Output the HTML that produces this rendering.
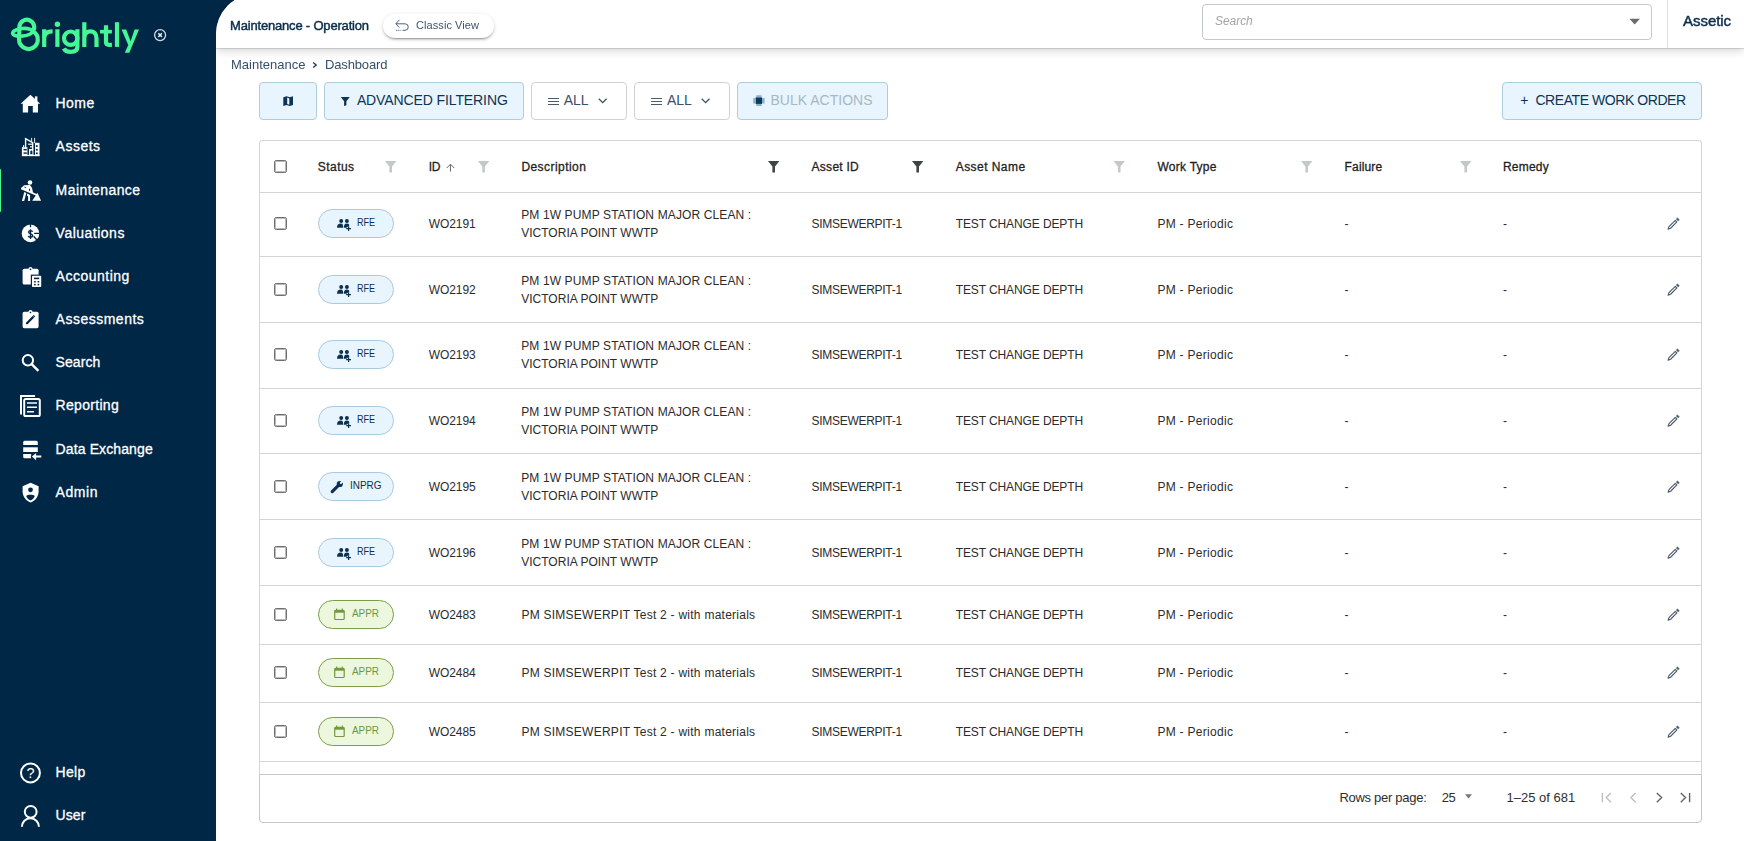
<!DOCTYPE html>
<html><head><meta charset="utf-8"><title>Maintenance - Operation</title>
<style>
*{box-sizing:border-box;margin:0;padding:0}
html,body{width:1744px;height:841px;overflow:hidden;background:#002746;font-family:"Liberation Sans",sans-serif}
.abs,.t,svg.i{position:absolute}
.t{white-space:pre;line-height:20px;height:20px}
#main{position:absolute;left:216px;top:-6px;width:1528px;height:847px;background:#fff;border-top-left-radius:40px}
#bar{position:absolute;left:216px;top:-6px;width:1528px;height:54px;background:#fff;border-top-left-radius:40px;
 box-shadow:0 1px 0 0 rgba(0,0,0,.12),0 3px 8px 0 rgba(0,0,0,.16);clip-path:inset(0 0 -30px 0)}
.btn{position:absolute;top:82px;height:38px;border-radius:4px;border:1px solid #aecddc;background:#e8f5fe}
.btn.w{background:#fff;border-color:#cfd3d6}
.hl{position:absolute;left:260px;width:1441px;height:1px;background:#d2d6d8}
.cb{position:absolute;left:274px;width:13px;height:13px;border:1px solid #6e6e6e;border-radius:2.2px;background:#fff;box-shadow:inset 0 0 0 1px rgba(118,118,118,.5)}
.chip{position:absolute;left:318px;width:76px;height:29px;border-radius:15px;border:1px solid #a9c9dc;background:#e8f5fe}
.chip.g{border-color:#7a9f48;background:#ecf7de}
</style></head><body>
<!-- sidebar active marker -->
<div class="abs" style="left:0;top:168.6px;width:1.2px;height:43.2px;background:#46f796;border-radius:0 1.2px 1.2px 0"></div>
<svg class="i" style="left:0;top:0" width="216" height="70" viewBox="0 0 216 70" fill="none" stroke="#46f796" stroke-width="4.2">
<path d="M33.8,31.9 A9.35,9.35 0 1 1 19.1,39.55 L19.4,27.2 A7.4,7.4 0 1 1 31.9,32.55" stroke-linejoin="round"/>
<ellipse cx="22.5" cy="32.3" rx="9.9" ry="3.8" stroke-width="3.6" transform="rotate(-6 22.5 32.3)"/>
<path d="M44.2,46.9 V29.3 M44.2,38.5 Q44.2,31.4 52.6,31.4"/>
<path d="M57.4,29.3 V46.9"/>
<circle cx="57.4" cy="24.3" r="2.7" fill="#46f796" stroke="none"/>
<circle cx="70.7" cy="38.2" r="6.7"/>
<path d="M77.4,29.3 V46.5 C77.4,50.5 74.5,51.9 70.8,51.9 C67.5,51.9 65,50.6 63.8,48.4"/>
<path d="M84.3,22.2 V46.9 M84.3,38.4 C84.3,33.5 87,31.4 90.4,31.4 C93.8,31.4 96.5,33.5 96.5,38.4 V46.9"/>
<path d="M106,25.2 V42 Q106,44.8 109,44.8 H111.9"/>
<path d="M100,31.7 H111.9" stroke-width="3.6"/>
<path d="M117,22.2 V46.9"/>
<path d="M121.5,29.5 L126.2,29.5 L130.6,41.3 L134.6,29.5 L139,29.5 L129.3,52.8 L124.8,52.8 L128.3,44.9 Z" fill="#46f796" stroke="none"/>
<circle cx="160.1" cy="35.1" r="5.5" stroke="#d3dae1" stroke-width="1.3"/>
<path d="M158.3,33.3 L161.9,36.9 M161.9,33.3 L158.3,36.9" stroke="#e6ebf0" stroke-width="1.5"/>
</svg>

<svg class="i" style="left:0;top:0" width="216" height="841" viewBox="0 0 216 841" fill="#fff" stroke="none">
<!-- home -->
<path d="M30.4,94.8 L40.2,103.8 L38,103.8 L38,112.4 L32.8,112.4 L32.8,106.1 L28.1,106.1 L28.1,112.4 L22.8,112.4 L22.8,103.8 L20.6,103.8 Z"/>
<rect x="34.9" y="96.4" width="2.5" height="5"/>
<!-- assets -->
<rect x="21.9" y="147.2" width="5.5" height="8.9"/><rect x="23" y="145.2" width="1.2" height="2.2"/>
<rect x="23.5" y="149" width="3.3" height="1.4" fill="#002746"/><rect x="23.5" y="152.4" width="3.3" height="1.4" fill="#002746"/>
<path d="M25.6,147.6 V138.6 L32.7,142.7 V149.4" fill="none" stroke="#fff" stroke-width="1.4"/>
<rect x="28.1" y="143.6" width="4.4" height="1.2"/><rect x="30" y="146.2" width="2.8" height="1.2"/>
<rect x="29" y="149" width="4.4" height="7.1"/>
<path d="M30.3,154.2 V151.6 A1.05,1.05 0 0 1 32.4,151.6 V154.2 Z" fill="#002746"/>
<rect x="35" y="142.8" width="4.5" height="13.3"/>
<rect x="35.9" y="145.2" width="1.8" height="1.7" fill="#002746"/><rect x="35.9" y="148.9" width="1.8" height="1.7" fill="#002746"/><rect x="35.9" y="152.5" width="1.8" height="1.7" fill="#002746"/>
<rect x="21.9" y="154.8" width="17.6" height="1.3"/>
<rect x="31.2" y="137.9" width="0.9" height="3.2"/><rect x="34.2" y="137.9" width="0.9" height="5.2"/>
<!-- maintenance -->
<circle cx="30" cy="182.5" r="2.3"/>
<path d="M21,187.9 L24.1,185.2 L29.9,185 L32,187.8 L33,192.6 L38.3,194.8 L37.6,196.3 L21,189.3 Z"/>
<path d="M32.2,200.8 L41.1,200.8 L37.4,192.8 L35.2,196.3 Z"/>
<path d="M24.3,192 L26.3,192.9 L24.2,200.9 L21.9,200.9 Z"/>
<path d="M27.3,193.6 L30.1,195 L30.1,200.9 L28.1,200.9 L28.1,196.2 L26.9,195.4 Z"/>
<path d="M24.5,187 L26.1,187.9 M29.55,188.7 V190.9" stroke="#002746" stroke-width="1" fill="none"/>
<!-- valuations -->
<circle cx="30.5" cy="233.4" r="8.8"/>
<path d="M34.2,233.4 H39.6 M33.6,236.2 L37.6,240.8 M30.5,224 V227.2" stroke="#002746" stroke-width="1.3"/>
<path d="M32.5,231.8 C32.2,230.2 28.6,230 28.6,232.2 C28.6,234.3 32.6,233.4 32.6,235.6 C32.6,237.9 28.7,237.6 28.3,235.9 M30.5,229.2 V238.9" fill="none" stroke="#002746" stroke-width="1.35"/>
<!-- accounting -->
<rect x="22.6" y="268.7" width="16" height="15.8" rx="1.6"/><circle cx="30.5" cy="269.2" r="2.1"/><circle cx="30.5" cy="269.4" r="0.8" fill="#002746"/>
<rect x="30.8" y="274.6" width="11.8" height="13.9" fill="#002746"/><rect x="32" y="275.8" width="9.2" height="11.3" rx="0.8"/>
<rect x="34" y="277.6" width="5.2" height="1.6" fill="#002746"/>
<rect x="34.1" y="281" width="1.6" height="1.5" fill="#002746"/><rect x="37.6" y="281" width="1.6" height="1.5" fill="#002746"/><rect x="34.1" y="283.9" width="1.6" height="1.5" fill="#002746"/><rect x="37.6" y="283.9" width="1.6" height="1.5" fill="#002746"/>
<!-- assessments -->
<rect x="22.6" y="311.7" width="16" height="16.5" rx="1.6"/><circle cx="30.5" cy="312.2" r="2.1"/><circle cx="30.5" cy="312.5" r="0.8" fill="#002746"/>
<path d="M27,323.2 L32.9,317.2" stroke="#002746" stroke-width="2.3" stroke-linecap="round"/><path d="M33.7,316.4 L34.4,315.7" stroke="#002746" stroke-width="2.3"/>
<!-- search -->
<circle cx="27.9" cy="360.3" r="5.2" fill="none" stroke="#fff" stroke-width="2"/><path d="M31.9,364.4 L38.4,370.9" stroke="#fff" stroke-width="2.4"/>
<!-- reporting -->
<path d="M21,414.6 V395.9 H35" fill="none" stroke="#fff" stroke-width="2"/>
<rect x="24.2" y="398.9" width="15.6" height="17.1" rx="1.6" fill="none" stroke="#fff" stroke-width="2"/>
<path d="M27,403 H37 M27,407.3 H37 M27,411.7 H34" stroke="#fff" stroke-width="1.5"/>
<!-- data exchange -->
<path d="M23.2,445.1 V442.3 Q23.2,440.8 24.7,440.8 H36.3 Q37.8,440.8 37.8,442.3 V445.1 Z"/>
<rect x="23.2" y="447.3" width="14.6" height="4.7"/>
<path d="M23.2,454.1 H31.2 V458.2 H24.7 Q23.2,458.2 23.2,456.7 Z"/>
<path d="M31.9,456.6 L36.1,452.9 V455.6 H41.3 V457.6 H36.1 V460.3 Z" stroke="#002746" stroke-width="2.2" stroke-linejoin="round"/><path d="M31.9,456.6 L36.1,452.9 V455.6 H41.3 V457.6 H36.1 V460.3 Z"/>
<!-- admin -->
<path d="M30.6,482.8 L38.6,486.3 V491.5 C38.6,496.5 35.2,501 30.6,502.5 C26,501 22.6,496.5 22.6,491.5 V486.3 Z"/>
<circle cx="30.5" cy="489.8" r="2.4" fill="#002746"/>
<path d="M26.2,495.9 C27.5,494.2 33.5,494.2 34.8,495.9 C34,498 32.5,499.7 30.5,500.5 C28.5,499.7 27,498 26.2,495.9 Z" fill="#002746"/>
<!-- help -->
<circle cx="30.45" cy="772.95" r="9.45" fill="none" stroke="#fff" stroke-width="2"/>
<text x="30.45" y="778.3" font-family="Liberation Sans, sans-serif" font-size="14.5" fill="#fff" text-anchor="middle">?</text>
<!-- user -->
<circle cx="30.7" cy="811.8" r="5.9" fill="none" stroke="#fff" stroke-width="2"/>
<path d="M21.9,826.8 A8.5,8.5 0 0 1 38.9,826.8" fill="none" stroke="#fff" stroke-width="2"/>
</svg>

<div id="main"></div>
<div id="bar"></div>
<div class="abs" style="left:382.5px;top:13.5px;width:111.5px;height:24px;border-radius:12px;background:#fff;box-shadow:0 3px 1px -2px rgba(0,0,0,.2),0 2px 2px 0 rgba(0,0,0,.14),0 1px 5px 0 rgba(0,0,0,.12)"></div>
<div class="abs" style="left:1202px;top:4px;width:450px;height:36px;border:1px solid #c3c9cd;border-radius:4px;background:#fff"></div>
<div class="abs" style="left:1667px;top:0;width:1px;height:48px;background:#e0e0e0"></div>
<div class="btn" style="left:259px;width:58px"></div>
<div class="btn" style="left:324px;width:200px"></div>
<div class="btn w" style="left:531px;width:96px"></div>
<div class="btn w" style="left:634px;width:96px"></div>
<div class="btn" style="left:737px;width:151px"></div>
<div class="btn" style="left:1502px;width:200px"></div>
<svg class="i" style="left:216px;top:0" width="1528" height="130" viewBox="216 0 1528 130" fill="none">
<path d="M399.4,19.8 L395.9,23.8 L399.4,27.6 M395.9,23.8 H405 A3.25,3.25 0 0 1 405,30.3 H402.5" stroke="#4a6580" stroke-width="1"/>
<path d="M396,30.3 H401.5" stroke="#4a6580" stroke-width="1" stroke-dasharray="1 0.8"/>
<path d="M1629.5,18.8 H1639.9 L1634.7,24.4 Z" fill="#6b6b6b"/>
<path d="M313.2,62.5 L316.2,65 L313.2,67.6" stroke="#1a3855" stroke-width="1.3"/>
<path d="M283.3,97.3 L286.7,96.2 L289.8,97.3 L293,96.2 V104.9 L289.8,106 L286.7,104.9 L283.3,106 Z" fill="#0e3353"/>
<path d="M287.2,97.6 L289.3,98.4 V104.7 L287.2,103.9 Z" fill="#eef8ff"/>
<path d="M340.8,96.9 H349.8 L346.4,101.3 V105.2 L344.1,106 V101.3 Z" fill="#0e3353"/>
<path d="M548,98.5 H559 M548,101.5 H559 M548,104.5 H559" stroke="#4a5a6a" stroke-width="1"/>
<path d="M651,98.5 H662 M651,101.5 H662 M651,104.5 H662" stroke="#4a5a6a" stroke-width="1"/>
<path d="M598.8,98.7 L602.6999999999999,102.6 L606.5999999999999,98.7" stroke="#3b4f66" stroke-width="1.3"/>
<path d="M701.7,98.7 L705.6,102.6 L709.5,98.7" stroke="#3b4f66" stroke-width="1.3"/>
<rect x="755.6" y="97.3" width="6.4" height="6.6" fill="#0a3a5c"/>
<path d="M756.2,95.2 h5.4 v2.1 h-5.4 Z M756.2,103.9 h5.4 v2.1 h-5.4 Z M753.2,98 h2.4 v5.4 h-2.4 Z M762,98 h2.6 v5.4 h-2.6 Z" fill="#8fb1c7"/>
</svg>
<div class="abs" style="left:259px;top:140px;width:1443px;height:634px;border:1px solid #d2d6d8;border-bottom:none;border-radius:4px 4px 0 0"></div>
<div class="abs" style="left:259px;top:774px;width:1443px;height:49px;border:1px solid #c6c6c6;border-radius:0 0 4px 4px"></div>
<div class="hl" style="top:192px"></div>
<div class="hl" style="top:256px"></div>
<div class="hl" style="top:322px"></div>
<div class="hl" style="top:388px"></div>
<div class="hl" style="top:453px"></div>
<div class="hl" style="top:519px"></div>
<div class="hl" style="top:585px"></div>
<div class="hl" style="top:644px"></div>
<div class="hl" style="top:702px"></div>
<div class="hl" style="top:761px"></div>
<div class="cb" style="top:160px"></div>
<div class="cb" style="top:217px"></div>
<div class="chip" style="top:209px"></div>
<div class="cb" style="top:283px"></div>
<div class="chip" style="top:275px"></div>
<div class="cb" style="top:348px"></div>
<div class="chip" style="top:340px"></div>
<div class="cb" style="top:414px"></div>
<div class="chip" style="top:406px"></div>
<div class="cb" style="top:480px"></div>
<div class="chip" style="top:472px"></div>
<div class="cb" style="top:546px"></div>
<div class="chip" style="top:538px"></div>
<div class="cb" style="top:608px"></div>
<div class="chip g" style="top:600px"></div>
<div class="cb" style="top:666px"></div>
<div class="chip g" style="top:658px"></div>
<div class="cb" style="top:725px"></div>
<div class="chip g" style="top:717px"></div>
<svg class="i" style="left:216px;top:130px" width="1528" height="711" viewBox="216 130 1528 711" fill="none">
<path d="M385,160.9 h11.4 l-4.4,5.7 v6 h-2.6 v-6 Z" fill="#c3c8cb"/>
<path d="M477.9,160.9 h11.4 l-4.4,5.7 v6 h-2.6 v-6 Z" fill="#c3c8cb"/>
<path d="M768,160.9 h11.4 l-4.4,5.7 v6 h-2.6 v-6 Z" fill="#3f4447"/>
<path d="M912,160.9 h11.4 l-4.4,5.7 v6 h-2.6 v-6 Z" fill="#3f4447"/>
<path d="M1113.5,160.9 h11.4 l-4.4,5.7 v6 h-2.6 v-6 Z" fill="#c3c8cb"/>
<path d="M1301,160.9 h11.4 l-4.4,5.7 v6 h-2.6 v-6 Z" fill="#c3c8cb"/>
<path d="M1460,160.9 h11.4 l-4.4,5.7 v6 h-2.6 v-6 Z" fill="#c3c8cb"/>
<path d="M450.45,171.6 V164.3 M446.7,168 L450.45,164.2 L454.2,168" stroke="#666" stroke-width="1"/>
<g transform="translate(0 0)" fill="#0b3050"><circle cx="341.2" cy="221.1" r="2"/><circle cx="346.9" cy="221.1" r="2"/><path d="M337,227.7 Q337,223.6 341,223.6 Q343.2,223.6 343.2,227.7 Z M343.8,227.7 Q343.8,223.6 347,223.6 Q349.4,223.6 349.4,225.6 L346.5,227.7 Z"/><path d="M348.6,226.3 V231.1 M346.2,228.7 H351" stroke="#0b3050" stroke-width="1.2"/></g>
<path d="M1668.10,229.10 L1670.61,228.22 L1676.90,221.92 L1675.28,220.30 L1668.98,226.59 Z" stroke="#4b5c6b" stroke-width="1.15" stroke-linejoin="round"/>
<path d="M1678.21,220.97 L1679.34,219.84 L1677.36,217.86 L1676.23,218.99 Z" fill="#4b5c6b" stroke="#4b5c6b" stroke-width="0.5" stroke-linejoin="round"/>
<g transform="translate(0 66)" fill="#0b3050"><circle cx="341.2" cy="221.1" r="2"/><circle cx="346.9" cy="221.1" r="2"/><path d="M337,227.7 Q337,223.6 341,223.6 Q343.2,223.6 343.2,227.7 Z M343.8,227.7 Q343.8,223.6 347,223.6 Q349.4,223.6 349.4,225.6 L346.5,227.7 Z"/><path d="M348.6,226.3 V231.1 M346.2,228.7 H351" stroke="#0b3050" stroke-width="1.2"/></g>
<path d="M1668.10,295.10 L1670.61,294.22 L1676.90,287.92 L1675.28,286.30 L1668.98,292.59 Z" stroke="#4b5c6b" stroke-width="1.15" stroke-linejoin="round"/>
<path d="M1678.21,286.97 L1679.34,285.84 L1677.36,283.86 L1676.23,284.99 Z" fill="#4b5c6b" stroke="#4b5c6b" stroke-width="0.5" stroke-linejoin="round"/>
<g transform="translate(0 131)" fill="#0b3050"><circle cx="341.2" cy="221.1" r="2"/><circle cx="346.9" cy="221.1" r="2"/><path d="M337,227.7 Q337,223.6 341,223.6 Q343.2,223.6 343.2,227.7 Z M343.8,227.7 Q343.8,223.6 347,223.6 Q349.4,223.6 349.4,225.6 L346.5,227.7 Z"/><path d="M348.6,226.3 V231.1 M346.2,228.7 H351" stroke="#0b3050" stroke-width="1.2"/></g>
<path d="M1668.10,360.10 L1670.61,359.22 L1676.90,352.92 L1675.28,351.30 L1668.98,357.59 Z" stroke="#4b5c6b" stroke-width="1.15" stroke-linejoin="round"/>
<path d="M1678.21,351.97 L1679.34,350.84 L1677.36,348.86 L1676.23,349.99 Z" fill="#4b5c6b" stroke="#4b5c6b" stroke-width="0.5" stroke-linejoin="round"/>
<g transform="translate(0 197)" fill="#0b3050"><circle cx="341.2" cy="221.1" r="2"/><circle cx="346.9" cy="221.1" r="2"/><path d="M337,227.7 Q337,223.6 341,223.6 Q343.2,223.6 343.2,227.7 Z M343.8,227.7 Q343.8,223.6 347,223.6 Q349.4,223.6 349.4,225.6 L346.5,227.7 Z"/><path d="M348.6,226.3 V231.1 M346.2,228.7 H351" stroke="#0b3050" stroke-width="1.2"/></g>
<path d="M1668.10,426.10 L1670.61,425.22 L1676.90,418.92 L1675.28,417.30 L1668.98,423.59 Z" stroke="#4b5c6b" stroke-width="1.15" stroke-linejoin="round"/>
<path d="M1678.21,417.97 L1679.34,416.84 L1677.36,414.86 L1676.23,415.99 Z" fill="#4b5c6b" stroke="#4b5c6b" stroke-width="0.5" stroke-linejoin="round"/>
<g transform="translate(0 0.8000000000000114)"><path d="M332.2,490.8 L338.5,484.5" stroke="#0b3050" stroke-width="3.1" stroke-linecap="round"/><circle cx="339.8" cy="483.2" r="3.1" fill="#0b3050"/><path d="M340.2,482.8 L343.6,479.4" stroke="#e8f5fe" stroke-width="2"/></g>
<path d="M1668.10,492.10 L1670.61,491.22 L1676.90,484.92 L1675.28,483.30 L1668.98,489.59 Z" stroke="#4b5c6b" stroke-width="1.15" stroke-linejoin="round"/>
<path d="M1678.21,483.97 L1679.34,482.84 L1677.36,480.86 L1676.23,481.99 Z" fill="#4b5c6b" stroke="#4b5c6b" stroke-width="0.5" stroke-linejoin="round"/>
<g transform="translate(0 329)" fill="#0b3050"><circle cx="341.2" cy="221.1" r="2"/><circle cx="346.9" cy="221.1" r="2"/><path d="M337,227.7 Q337,223.6 341,223.6 Q343.2,223.6 343.2,227.7 Z M343.8,227.7 Q343.8,223.6 347,223.6 Q349.4,223.6 349.4,225.6 L346.5,227.7 Z"/><path d="M348.6,226.3 V231.1 M346.2,228.7 H351" stroke="#0b3050" stroke-width="1.2"/></g>
<path d="M1668.10,558.10 L1670.61,557.22 L1676.90,550.92 L1675.28,549.30 L1668.98,555.59 Z" stroke="#4b5c6b" stroke-width="1.15" stroke-linejoin="round"/>
<path d="M1678.21,549.97 L1679.34,548.84 L1677.36,546.86 L1676.23,547.99 Z" fill="#4b5c6b" stroke="#4b5c6b" stroke-width="0.5" stroke-linejoin="round"/>
<g transform="translate(0 0)"><rect x="334.7" y="610.4" width="9.5" height="9.1" rx="1" stroke="#74983e" stroke-width="1.2"/><rect x="334.7" y="610.4" width="9.5" height="2.3" fill="#74983e"/><path d="M336.6,608.4 V610.5 M342.3,608.4 V610.5" stroke="#74983e" stroke-width="1.2"/></g>
<path d="M1668.10,620.10 L1670.61,619.22 L1676.90,612.92 L1675.28,611.30 L1668.98,617.59 Z" stroke="#4b5c6b" stroke-width="1.15" stroke-linejoin="round"/>
<path d="M1678.21,611.97 L1679.34,610.84 L1677.36,608.86 L1676.23,609.99 Z" fill="#4b5c6b" stroke="#4b5c6b" stroke-width="0.5" stroke-linejoin="round"/>
<g transform="translate(0 58)"><rect x="334.7" y="610.4" width="9.5" height="9.1" rx="1" stroke="#74983e" stroke-width="1.2"/><rect x="334.7" y="610.4" width="9.5" height="2.3" fill="#74983e"/><path d="M336.6,608.4 V610.5 M342.3,608.4 V610.5" stroke="#74983e" stroke-width="1.2"/></g>
<path d="M1668.10,678.10 L1670.61,677.22 L1676.90,670.92 L1675.28,669.30 L1668.98,675.59 Z" stroke="#4b5c6b" stroke-width="1.15" stroke-linejoin="round"/>
<path d="M1678.21,669.97 L1679.34,668.84 L1677.36,666.86 L1676.23,667.99 Z" fill="#4b5c6b" stroke="#4b5c6b" stroke-width="0.5" stroke-linejoin="round"/>
<g transform="translate(0 117)"><rect x="334.7" y="610.4" width="9.5" height="9.1" rx="1" stroke="#74983e" stroke-width="1.2"/><rect x="334.7" y="610.4" width="9.5" height="2.3" fill="#74983e"/><path d="M336.6,608.4 V610.5 M342.3,608.4 V610.5" stroke="#74983e" stroke-width="1.2"/></g>
<path d="M1668.10,737.10 L1670.61,736.22 L1676.90,729.92 L1675.28,728.30 L1668.98,734.59 Z" stroke="#4b5c6b" stroke-width="1.15" stroke-linejoin="round"/>
<path d="M1678.21,728.97 L1679.34,727.84 L1677.36,725.86 L1676.23,726.99 Z" fill="#4b5c6b" stroke="#4b5c6b" stroke-width="0.5" stroke-linejoin="round"/>
<path d="M1465,794.2 H1472 L1468.5,798.4 Z" fill="#777"/>
<path d="M1602.4,792.9 V802.3 M1611,793 L1606.3,797.6 L1611,802.2 M1635.6,793 L1631,797.6 L1635.6,802.2" stroke="#bdbdbd" stroke-width="1.4"/>
<path d="M1656.8,793 L1661.6,797.6 L1656.8,802.2 M1680.8,793 L1685.5,797.6 L1680.8,802.2 M1689.6,792.9 V802.3" stroke="#60646a" stroke-width="1.4"/>
</svg>
<div class="t" style="left:55.60px;top:93px;font-size:14px;color:#ffffff;letter-spacing:0.414px;-webkit-text-stroke:0.3px #ffffff;">Home</div>
<div class="t" style="left:55.60px;top:136px;font-size:14px;color:#ffffff;letter-spacing:0.497px;-webkit-text-stroke:0.3px #ffffff;">Assets</div>
<div class="t" style="left:55.60px;top:180px;font-size:14px;color:#ffffff;letter-spacing:0.433px;-webkit-text-stroke:0.3px #ffffff;">Maintenance</div>
<div class="t" style="left:55.60px;top:223px;font-size:14px;color:#ffffff;letter-spacing:0.495px;-webkit-text-stroke:0.3px #ffffff;">Valuations</div>
<div class="t" style="left:55.60px;top:266px;font-size:14px;color:#ffffff;letter-spacing:0.502px;-webkit-text-stroke:0.3px #ffffff;">Accounting</div>
<div class="t" style="left:55.60px;top:309px;font-size:14px;color:#ffffff;letter-spacing:0.495px;-webkit-text-stroke:0.3px #ffffff;">Assessments</div>
<div class="t" style="left:55.60px;top:352px;font-size:14px;color:#ffffff;letter-spacing:0.068px;-webkit-text-stroke:0.3px #ffffff;">Search</div>
<div class="t" style="left:55.60px;top:395px;font-size:14px;color:#ffffff;letter-spacing:0.300px;-webkit-text-stroke:0.3px #ffffff;">Reporting</div>
<div class="t" style="left:55.60px;top:439px;font-size:14px;color:#ffffff;letter-spacing:0.114px;-webkit-text-stroke:0.3px #ffffff;">Data Exchange</div>
<div class="t" style="left:55.60px;top:482px;font-size:14px;color:#ffffff;letter-spacing:0.553px;-webkit-text-stroke:0.3px #ffffff;">Admin</div>
<div class="t" style="left:55.60px;top:762px;font-size:14px;color:#ffffff;letter-spacing:0.301px;-webkit-text-stroke:0.3px #ffffff;">Help</div>
<div class="t" style="left:55.60px;top:805px;font-size:14px;color:#ffffff;letter-spacing:0.046px;-webkit-text-stroke:0.3px #ffffff;">User</div>
<div class="t" style="left:230.40px;top:16px;font-size:13px;color:#0b2d4b;letter-spacing:-0.182px;-webkit-text-stroke:0.45px #0b2d4b;will-change:transform;">Maintenance - Operation</div>
<div class="t" style="left:416.10px;top:15px;font-size:11px;color:#3a556f;letter-spacing:0.077px;will-change:transform;">Classic View</div>
<div class="t" style="left:1214.60px;top:11px;font-size:12px;color:#a3a3a3;letter-spacing:-0.046px;font-style:italic;will-change:transform;">Search</div>
<div class="t" style="left:1682.50px;top:11px;font-size:15px;color:#0b2d4b;letter-spacing:-0.043px;-webkit-text-stroke:0.45px #0b2d4b;will-change:transform;">Assetic</div>
<div class="t" style="left:230.70px;top:55px;font-size:13px;color:#34506a;letter-spacing:0.015px;will-change:transform;">Maintenance</div>
<div class="t" style="left:324.90px;top:55px;font-size:13px;color:#34506a;letter-spacing:-0.151px;will-change:transform;">Dashboard</div>
<div class="t" style="left:356.90px;top:90px;font-size:14px;color:#0e3353;letter-spacing:-0.108px;">ADVANCED FILTERING</div>
<div class="t" style="left:563.80px;top:90px;font-size:14px;color:#3b4f66;letter-spacing:-0.061px;">ALL</div>
<div class="t" style="left:667.10px;top:90px;font-size:14px;color:#3b4f66;letter-spacing:-0.061px;">ALL</div>
<div class="t" style="left:770.50px;top:90px;font-size:14px;color:#a9b7c2;letter-spacing:0.007px;">BULK ACTIONS</div>
<div class="t" style="left:1520.20px;top:90px;font-size:14px;color:#0e3353;">+</div>
<div class="t" style="left:1535.40px;top:90px;font-size:14px;color:#0e3353;letter-spacing:-0.434px;">CREATE WORK ORDER</div>
<div class="t" style="left:317.80px;top:157px;font-size:12px;color:#1f1f1f;letter-spacing:0.454px;-webkit-text-stroke:0.3px #1f1f1f;">Status</div>
<div class="t" style="left:428.70px;top:157px;font-size:12px;color:#1f1f1f;letter-spacing:-0.300px;-webkit-text-stroke:0.3px #1f1f1f;">ID</div>
<div class="t" style="left:521.40px;top:157px;font-size:12px;color:#1f1f1f;letter-spacing:0.447px;-webkit-text-stroke:0.3px #1f1f1f;">Description</div>
<div class="t" style="left:811.60px;top:157px;font-size:12px;color:#1f1f1f;letter-spacing:0.263px;-webkit-text-stroke:0.3px #1f1f1f;">Asset ID</div>
<div class="t" style="left:955.70px;top:157px;font-size:12px;color:#1f1f1f;letter-spacing:0.449px;-webkit-text-stroke:0.3px #1f1f1f;">Asset Name</div>
<div class="t" style="left:1157.40px;top:157px;font-size:12px;color:#1f1f1f;letter-spacing:0.272px;-webkit-text-stroke:0.3px #1f1f1f;">Work Type</div>
<div class="t" style="left:1344.60px;top:157px;font-size:12px;color:#1f1f1f;letter-spacing:0.152px;-webkit-text-stroke:0.3px #1f1f1f;">Failure</div>
<div class="t" style="left:1502.90px;top:157px;font-size:12px;color:#1f1f1f;letter-spacing:0.222px;-webkit-text-stroke:0.3px #1f1f1f;">Remedy</div>
<div class="t" style="left:428.70px;top:214px;font-size:12px;color:#2b2b2b;letter-spacing:-0.072px;">WO2191</div>
<div class="t" style="left:521.20px;top:205px;font-size:12px;color:#2b2b2b;letter-spacing:0.128px;">PM 1W PUMP STATION MAJOR CLEAN :</div>
<div class="t" style="left:521.20px;top:223px;font-size:12px;color:#2b2b2b;letter-spacing:0.016px;">VICTORIA POINT WWTP</div>
<div class="t" style="left:811.60px;top:214px;font-size:12px;color:#2b2b2b;letter-spacing:-0.293px;">SIMSEWERPIT-1</div>
<div class="t" style="left:955.70px;top:214px;font-size:12px;color:#2b2b2b;letter-spacing:-0.103px;">TEST CHANGE DEPTH</div>
<div class="t" style="left:1157.40px;top:214px;font-size:12px;color:#2b2b2b;letter-spacing:0.289px;">PM - Periodic</div>
<div class="t" style="left:1344.60px;top:214px;font-size:12px;color:#2b2b2b;">-</div>
<div class="t" style="left:1502.90px;top:214px;font-size:12px;color:#2b2b2b;">-</div>
<div class="t" style="left:357.00px;top:212px;font-size:11px;color:#0b3050;transform:scaleX(0.8227);transform-origin:0 0;">RFE</div>
<div class="t" style="left:428.70px;top:280px;font-size:12px;color:#2b2b2b;letter-spacing:-0.072px;">WO2192</div>
<div class="t" style="left:521.20px;top:271px;font-size:12px;color:#2b2b2b;letter-spacing:0.128px;">PM 1W PUMP STATION MAJOR CLEAN :</div>
<div class="t" style="left:521.20px;top:289px;font-size:12px;color:#2b2b2b;letter-spacing:0.016px;">VICTORIA POINT WWTP</div>
<div class="t" style="left:811.60px;top:280px;font-size:12px;color:#2b2b2b;letter-spacing:-0.293px;">SIMSEWERPIT-1</div>
<div class="t" style="left:955.70px;top:280px;font-size:12px;color:#2b2b2b;letter-spacing:-0.103px;">TEST CHANGE DEPTH</div>
<div class="t" style="left:1157.40px;top:280px;font-size:12px;color:#2b2b2b;letter-spacing:0.289px;">PM - Periodic</div>
<div class="t" style="left:1344.60px;top:280px;font-size:12px;color:#2b2b2b;">-</div>
<div class="t" style="left:1502.90px;top:280px;font-size:12px;color:#2b2b2b;">-</div>
<div class="t" style="left:357.00px;top:278px;font-size:11px;color:#0b3050;transform:scaleX(0.8227);transform-origin:0 0;">RFE</div>
<div class="t" style="left:428.70px;top:345px;font-size:12px;color:#2b2b2b;letter-spacing:-0.072px;">WO2193</div>
<div class="t" style="left:521.20px;top:336px;font-size:12px;color:#2b2b2b;letter-spacing:0.128px;">PM 1W PUMP STATION MAJOR CLEAN :</div>
<div class="t" style="left:521.20px;top:354px;font-size:12px;color:#2b2b2b;letter-spacing:0.016px;">VICTORIA POINT WWTP</div>
<div class="t" style="left:811.60px;top:345px;font-size:12px;color:#2b2b2b;letter-spacing:-0.293px;">SIMSEWERPIT-1</div>
<div class="t" style="left:955.70px;top:345px;font-size:12px;color:#2b2b2b;letter-spacing:-0.103px;">TEST CHANGE DEPTH</div>
<div class="t" style="left:1157.40px;top:345px;font-size:12px;color:#2b2b2b;letter-spacing:0.289px;">PM - Periodic</div>
<div class="t" style="left:1344.60px;top:345px;font-size:12px;color:#2b2b2b;">-</div>
<div class="t" style="left:1502.90px;top:345px;font-size:12px;color:#2b2b2b;">-</div>
<div class="t" style="left:357.00px;top:343px;font-size:11px;color:#0b3050;transform:scaleX(0.8227);transform-origin:0 0;">RFE</div>
<div class="t" style="left:428.70px;top:411px;font-size:12px;color:#2b2b2b;letter-spacing:-0.072px;">WO2194</div>
<div class="t" style="left:521.20px;top:402px;font-size:12px;color:#2b2b2b;letter-spacing:0.128px;">PM 1W PUMP STATION MAJOR CLEAN :</div>
<div class="t" style="left:521.20px;top:420px;font-size:12px;color:#2b2b2b;letter-spacing:0.016px;">VICTORIA POINT WWTP</div>
<div class="t" style="left:811.60px;top:411px;font-size:12px;color:#2b2b2b;letter-spacing:-0.293px;">SIMSEWERPIT-1</div>
<div class="t" style="left:955.70px;top:411px;font-size:12px;color:#2b2b2b;letter-spacing:-0.103px;">TEST CHANGE DEPTH</div>
<div class="t" style="left:1157.40px;top:411px;font-size:12px;color:#2b2b2b;letter-spacing:0.289px;">PM - Periodic</div>
<div class="t" style="left:1344.60px;top:411px;font-size:12px;color:#2b2b2b;">-</div>
<div class="t" style="left:1502.90px;top:411px;font-size:12px;color:#2b2b2b;">-</div>
<div class="t" style="left:357.00px;top:409px;font-size:11px;color:#0b3050;transform:scaleX(0.8227);transform-origin:0 0;">RFE</div>
<div class="t" style="left:428.70px;top:477px;font-size:12px;color:#2b2b2b;letter-spacing:-0.072px;">WO2195</div>
<div class="t" style="left:521.20px;top:468px;font-size:12px;color:#2b2b2b;letter-spacing:0.128px;">PM 1W PUMP STATION MAJOR CLEAN :</div>
<div class="t" style="left:521.20px;top:486px;font-size:12px;color:#2b2b2b;letter-spacing:0.016px;">VICTORIA POINT WWTP</div>
<div class="t" style="left:811.60px;top:477px;font-size:12px;color:#2b2b2b;letter-spacing:-0.293px;">SIMSEWERPIT-1</div>
<div class="t" style="left:955.70px;top:477px;font-size:12px;color:#2b2b2b;letter-spacing:-0.103px;">TEST CHANGE DEPTH</div>
<div class="t" style="left:1157.40px;top:477px;font-size:12px;color:#2b2b2b;letter-spacing:0.289px;">PM - Periodic</div>
<div class="t" style="left:1344.60px;top:477px;font-size:12px;color:#2b2b2b;">-</div>
<div class="t" style="left:1502.90px;top:477px;font-size:12px;color:#2b2b2b;">-</div>
<div class="t" style="left:349.90px;top:475px;font-size:11px;color:#0b3050;transform:scaleX(0.9040);transform-origin:0 0;">INPRG</div>
<div class="t" style="left:428.70px;top:543px;font-size:12px;color:#2b2b2b;letter-spacing:-0.072px;">WO2196</div>
<div class="t" style="left:521.20px;top:534px;font-size:12px;color:#2b2b2b;letter-spacing:0.128px;">PM 1W PUMP STATION MAJOR CLEAN :</div>
<div class="t" style="left:521.20px;top:552px;font-size:12px;color:#2b2b2b;letter-spacing:0.016px;">VICTORIA POINT WWTP</div>
<div class="t" style="left:811.60px;top:543px;font-size:12px;color:#2b2b2b;letter-spacing:-0.293px;">SIMSEWERPIT-1</div>
<div class="t" style="left:955.70px;top:543px;font-size:12px;color:#2b2b2b;letter-spacing:-0.103px;">TEST CHANGE DEPTH</div>
<div class="t" style="left:1157.40px;top:543px;font-size:12px;color:#2b2b2b;letter-spacing:0.289px;">PM - Periodic</div>
<div class="t" style="left:1344.60px;top:543px;font-size:12px;color:#2b2b2b;">-</div>
<div class="t" style="left:1502.90px;top:543px;font-size:12px;color:#2b2b2b;">-</div>
<div class="t" style="left:357.00px;top:541px;font-size:11px;color:#0b3050;transform:scaleX(0.8227);transform-origin:0 0;">RFE</div>
<div class="t" style="left:428.70px;top:605px;font-size:12px;color:#2b2b2b;letter-spacing:-0.072px;">WO2483</div>
<div class="t" style="left:521.40px;top:605px;font-size:12px;color:#2b2b2b;letter-spacing:0.255px;">PM SIMSEWERPIT Test 2 - with materials</div>
<div class="t" style="left:811.60px;top:605px;font-size:12px;color:#2b2b2b;letter-spacing:-0.293px;">SIMSEWERPIT-1</div>
<div class="t" style="left:955.70px;top:605px;font-size:12px;color:#2b2b2b;letter-spacing:-0.103px;">TEST CHANGE DEPTH</div>
<div class="t" style="left:1157.40px;top:605px;font-size:12px;color:#2b2b2b;letter-spacing:0.289px;">PM - Periodic</div>
<div class="t" style="left:1344.60px;top:605px;font-size:12px;color:#2b2b2b;">-</div>
<div class="t" style="left:1502.90px;top:605px;font-size:12px;color:#2b2b2b;">-</div>
<div class="t" style="left:351.80px;top:603px;font-size:11px;color:#6b983c;transform:scaleX(0.9009);transform-origin:0 0;">APPR</div>
<div class="t" style="left:428.70px;top:663px;font-size:12px;color:#2b2b2b;letter-spacing:-0.072px;">WO2484</div>
<div class="t" style="left:521.40px;top:663px;font-size:12px;color:#2b2b2b;letter-spacing:0.255px;">PM SIMSEWERPIT Test 2 - with materials</div>
<div class="t" style="left:811.60px;top:663px;font-size:12px;color:#2b2b2b;letter-spacing:-0.293px;">SIMSEWERPIT-1</div>
<div class="t" style="left:955.70px;top:663px;font-size:12px;color:#2b2b2b;letter-spacing:-0.103px;">TEST CHANGE DEPTH</div>
<div class="t" style="left:1157.40px;top:663px;font-size:12px;color:#2b2b2b;letter-spacing:0.289px;">PM - Periodic</div>
<div class="t" style="left:1344.60px;top:663px;font-size:12px;color:#2b2b2b;">-</div>
<div class="t" style="left:1502.90px;top:663px;font-size:12px;color:#2b2b2b;">-</div>
<div class="t" style="left:351.80px;top:661px;font-size:11px;color:#6b983c;transform:scaleX(0.9009);transform-origin:0 0;">APPR</div>
<div class="t" style="left:428.70px;top:722px;font-size:12px;color:#2b2b2b;letter-spacing:-0.072px;">WO2485</div>
<div class="t" style="left:521.40px;top:722px;font-size:12px;color:#2b2b2b;letter-spacing:0.255px;">PM SIMSEWERPIT Test 2 - with materials</div>
<div class="t" style="left:811.60px;top:722px;font-size:12px;color:#2b2b2b;letter-spacing:-0.293px;">SIMSEWERPIT-1</div>
<div class="t" style="left:955.70px;top:722px;font-size:12px;color:#2b2b2b;letter-spacing:-0.103px;">TEST CHANGE DEPTH</div>
<div class="t" style="left:1157.40px;top:722px;font-size:12px;color:#2b2b2b;letter-spacing:0.289px;">PM - Periodic</div>
<div class="t" style="left:1344.60px;top:722px;font-size:12px;color:#2b2b2b;">-</div>
<div class="t" style="left:1502.90px;top:722px;font-size:12px;color:#2b2b2b;">-</div>
<div class="t" style="left:351.80px;top:720px;font-size:11px;color:#6b983c;transform:scaleX(0.9009);transform-origin:0 0;">APPR</div>
<div class="t" style="left:1339.40px;top:788px;font-size:13px;color:#2e2e2e;letter-spacing:-0.282px;">Rows per page:</div>
<div class="t" style="left:1441.70px;top:788px;font-size:13px;color:#2e2e2e;letter-spacing:-0.369px;">25</div>
<div class="t" style="left:1506.60px;top:788px;font-size:13px;color:#2e2e2e;letter-spacing:-0.009px;">1–25 of 681</div>
</body></html>
